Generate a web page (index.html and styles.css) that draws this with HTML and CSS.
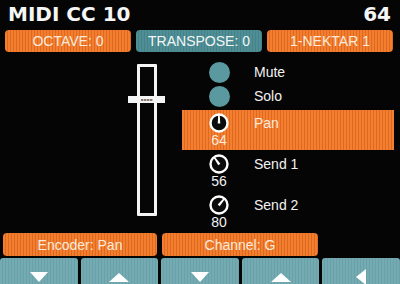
FILE: index.html
```html
<!DOCTYPE html>
<html>
<head>
<meta charset="utf-8">
<link rel="stylesheet" href="styles.css">
</head>
<body>
<div class="screen">
  <header class="header">
    <span class="title">MIDI CC 10</span>
    <span class="value">64</span>
  </header>
  <div class="tabs">
    <div class="tab orange">OCTAVE: 0</div>
    <div class="tab teal">TRANSPOSE: 0</div>
    <div class="tab orange">1-NEKTAR 1</div>
  </div>
  <div class="main">
    <div class="fader-col">
      <div class="fader">
        <div class="cap"><div class="cap-line"></div></div>
      </div>
    </div>
    <div class="list">
      <div class="row small">
        <div class="icon"><span class="dot"></span></div>
        <div class="label">Mute</div>
      </div>
      <div class="row small">
        <div class="icon"><span class="dot"></span></div>
        <div class="label">Solo</div>
      </div>
      <div class="row knob-row selected">
        <div class="icon">
          <svg class="knob" width="20" height="20" viewBox="0 0 20 20"><circle cx="10" cy="10" r="8.5" fill="#0c0c0c" stroke="#fff" stroke-width="2.4"/><g transform="rotate(0 10 10)"><path d="M8.7 10.5 L9.2 2.2 L10.8 2.2 L11.3 10.5 Z" fill="#fff"/></g></svg>
          <span class="num">64</span>
        </div>
        <div class="label">Pan</div>
      </div>
      <div class="row knob-row">
        <div class="icon">
          <svg class="knob" width="20" height="20" viewBox="0 0 20 20"><circle cx="10" cy="10" r="8.5" fill="#0c0c0c" stroke="#fff" stroke-width="2.4"/><g transform="rotate(-35 10 10)"><path d="M8.7 10.5 L9.2 2.2 L10.8 2.2 L11.3 10.5 Z" fill="#fff"/></g></svg>
          <span class="num">56</span>
        </div>
        <div class="label">Send 1</div>
      </div>
      <div class="row knob-row">
        <div class="icon">
          <svg class="knob" width="20" height="20" viewBox="0 0 20 20"><circle cx="10" cy="10" r="8.5" fill="#0c0c0c" stroke="#fff" stroke-width="2.4"/><g transform="rotate(40 10 10)"><path d="M8.7 10.5 L9.2 2.2 L10.8 2.2 L11.3 10.5 Z" fill="#fff"/></g></svg>
          <span class="num">80</span>
        </div>
        <div class="label">Send 2</div>
      </div>
    </div>
  </div>
  <div class="bottom-tabs">
    <div class="tab orange">Encoder: Pan</div>
    <div class="tab orange">Channel: G</div>
  </div>
  <div class="buttons">
    <div class="btn"><svg width="18" height="10" viewBox="0 0 18 10"><path d="M0 0 H18 L9 10 Z" fill="#fff"/></svg></div>
    <div class="btn"><svg width="20" height="9" viewBox="0 0 20 9"><path d="M0 9 H20 L10 0 Z" fill="#fff"/></svg></div>
    <div class="btn"><svg width="18" height="10" viewBox="0 0 18 10"><path d="M0 0 H18 L9 10 Z" fill="#fff"/></svg></div>
    <div class="btn"><svg width="20" height="9" viewBox="0 0 20 9"><path d="M0 9 H20 L10 0 Z" fill="#fff"/></svg></div>
    <div class="btn"><svg width="10" height="16" viewBox="0 0 10 16"><path d="M10 0 V16 L0 8 Z" fill="#fff"/></svg></div>
  </div>
</div>
</body>
</html>
```
FILE: styles.css
```css
html, body {
  margin: 0;
  padding: 0;
  background: #050505;
}
body {
  width: 400px;
  height: 284px;
  overflow: hidden;
  font-family: "Liberation Sans", Arial, sans-serif;
  color: #f2f2f2;
}
.screen {
  width: 400px;
  display: flex;
  flex-direction: column;
}
.screen > * {
  flex: none;
}
.header {
  height: 30px;
  box-sizing: border-box;
  padding: 3px 9px 0 8px;
  display: flex;
  justify-content: space-between;
  font-family: "DejaVu Sans", sans-serif;
  font-weight: bold;
  font-size: 20px;
  line-height: 23px;
  color: #f6f6f6;
}
.tabs {
  height: 22px;
  margin: 0 7px 0 5px;
  display: grid;
  grid-template-columns: 1fr 1fr 1fr;
  gap: 5px;
}
.tab {
  border-radius: 4px;
  display: flex;
  align-items: center;
  justify-content: center;
  font-size: 14px;
  line-height: 16px;
  color: #fbeadb;
}
.orange {
  background: repeating-linear-gradient(90deg, #f47e2f 0 2px, #de6a20 2px 3px);
}
.teal {
  background: repeating-linear-gradient(90deg, #4f8e94 0 2px, #45838a 2px 3px);
  color: #f2f6f6;
}
.main {
  height: 181px;
  box-sizing: border-box;
  padding-top: 8px;
  display: flex;
}
.fader-col {
  width: 182px;
  flex: none;
}
.fader {
  position: relative;
  margin: 4px 0 0 137px;
  width: 20px;
  height: 152px;
  box-sizing: border-box;
  border: 3px solid #f4f4f4;
  border-radius: 1px;
  background: #060606;
}
.cap {
  position: absolute;
  left: -12px;
  top: 29px;
  width: 37px;
  height: 7px;
  background: #f4f4f4;
  display: flex;
  align-items: center;
  justify-content: center;
}
.cap-line {
  width: 12px;
  height: 2px;
  background: repeating-linear-gradient(90deg, #8a7a70 0 2px, #c8c0b8 2px 3px);
}
.list {
  width: 212px;
  display: flex;
  flex-direction: column;
}
.row {
  display: flex;
  flex: none;
}
.row.small {
  height: 24px;
  align-items: center;
}
.row.small + .row.small {
  margin-bottom: 2px;
}
.icon {
  width: 74px;
  flex: none;
  display: flex;
  flex-direction: column;
  align-items: center;
}
.dot {
  width: 21px;
  height: 21px;
  border-radius: 50%;
  background: #5a999f;
}
.label {
  font-size: 14px;
  line-height: 20px;
  color: #f2f2f2;
  margin-left: -2px;
}
.knob-row {
  height: 41px;
  box-sizing: border-box;
  padding-top: 4px;
}
.knob-row.selected {
  height: 40px;
  padding-top: 3px;
  background: repeating-linear-gradient(90deg, #f47f30 0 2px, #dd6a20 2px 3px);
}
.knob {
  display: block;
}
.num {
  font-size: 14px;
  line-height: 14px;
  color: #f2f2f2;
}
.selected .num,
.selected .label {
  color: #fbeadb;
}
.bottom-tabs {
  height: 23px;
  padding-left: 3px;
  display: grid;
  grid-template-columns: 154px 156px;
  gap: 5px;
}
.buttons {
  margin-top: 2px;
  height: 30px;
  display: grid;
  grid-template-columns: repeat(5, 1fr);
  gap: 3px;
}
.btn {
  background: repeating-linear-gradient(90deg, #74abb3 0 2px, #6aa1a9 2px 3px);
  border-radius: 3px 3px 0 0;
  display: flex;
  align-items: center;
  justify-content: center;
  padding-top: 8px;
}
.btn svg {
  display: block;
}
```
